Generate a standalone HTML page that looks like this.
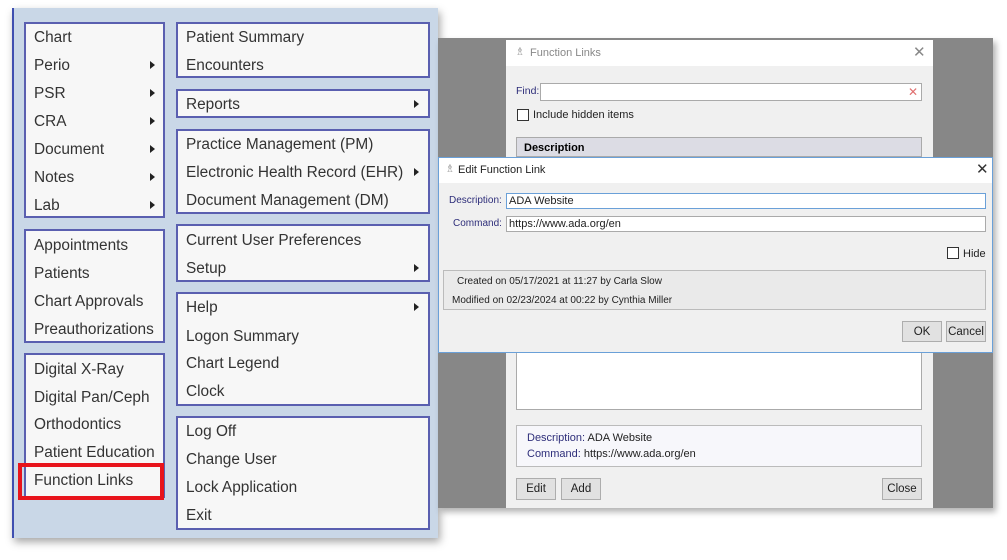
<!DOCTYPE html>
<html><head><style>
*{margin:0;padding:0;box-sizing:border-box}
body{width:1007px;height:560px;background:#fff;position:relative;overflow:hidden;font-family:"Liberation Sans",sans-serif}
.a{position:absolute}
.menu{left:12px;top:8px;width:426px;height:530px;background:#c9d7e7;border-left:2px solid #3f4fb0;box-shadow:2px 4px 8px rgba(0,0,0,.35)}
.box{position:absolute;background:#f7f7f7;border:2px solid #5a5fb0}
.it{position:absolute;left:8px;font-size:15.4px;color:#333;white-space:nowrap;margin-top:1px}
.ar{position:absolute;width:0;height:0;border-left:5px solid #222;border-top:4px solid transparent;border-bottom:4px solid transparent}
.gray{left:438px;top:38px;width:555px;height:470px;background:#878787;box-shadow:3px 4px 6px rgba(0,0,0,.3)}
.s{font-size:11px;color:#222}
.btn{position:absolute;background:#e1e1e1;border:1px solid #adadad;font-size:11.5px;color:#222;text-align:center}
.fld{position:absolute;background:#fff;border:1px solid #aaa}
.lbl{color:#2e2e7a}
.cb{position:absolute;width:12px;height:12px;border:1px solid #333;background:#fff}
</style></head><body>
<div class="a menu"></div>
<div class="box" style="left:24px;top:22px;width:141px;height:196px"></div>
<div class="box" style="left:24px;top:229px;width:141px;height:114px"></div>
<div class="box" style="left:24px;top:353px;width:141px;height:145px"></div>
<div class="box" style="left:176px;top:22px;width:254px;height:56px"></div>
<div class="box" style="left:176px;top:89px;width:254px;height:29px"></div>
<div class="box" style="left:176px;top:129px;width:254px;height:85px"></div>
<div class="box" style="left:176px;top:224px;width:254px;height:58px"></div>
<div class="box" style="left:176px;top:292px;width:254px;height:114px"></div>
<div class="box" style="left:176px;top:416px;width:254px;height:114px"></div>
<div class="a" style="left:18px;top:463px;width:146px;height:37px;border:4px solid #e8141c"></div>
<div class="it" style="left:34px;top:28px">Chart</div>
<div class="it" style="left:34px;top:56px">Perio</div>
<div class="it" style="left:34px;top:84px">PSR</div>
<div class="it" style="left:34px;top:112px">CRA</div>
<div class="it" style="left:34px;top:140px">Document</div>
<div class="it" style="left:34px;top:168px">Notes</div>
<div class="it" style="left:34px;top:196px">Lab</div>
<div class="ar" style="left:150px;top:61px"></div><div class="ar" style="left:150px;top:89px"></div><div class="ar" style="left:150px;top:117px"></div><div class="ar" style="left:150px;top:145px"></div><div class="ar" style="left:150px;top:173px"></div><div class="ar" style="left:150px;top:201px"></div>
<div class="it" style="left:34px;top:236px">Appointments</div>
<div class="it" style="left:34px;top:264px">Patients</div>
<div class="it" style="left:34px;top:292px">Chart Approvals</div>
<div class="it" style="left:34px;top:320px">Preauthorizations</div>
<div class="it" style="left:34px;top:360px">Digital X-Ray</div>
<div class="it" style="left:34px;top:388px">Digital Pan/Ceph</div>
<div class="it" style="left:34px;top:415px">Orthodontics</div>
<div class="it" style="left:34px;top:443px">Patient Education</div>
<div class="it" style="left:34px;top:471px">Function Links</div>
<div class="it" style="left:186px;top:28px">Patient Summary</div>
<div class="it" style="left:186px;top:56px">Encounters</div>
<div class="it" style="left:186px;top:95px">Reports</div>
<div class="it" style="left:186px;top:135px">Practice Management (PM)</div>
<div class="it" style="left:186px;top:163px">Electronic Health Record (EHR)</div>
<div class="it" style="left:186px;top:191px">Document Management (DM)</div>
<div class="it" style="left:186px;top:231px">Current User Preferences</div>
<div class="it" style="left:186px;top:259px">Setup</div>
<div class="it" style="left:186px;top:298px">Help</div>
<div class="it" style="left:186px;top:327px">Logon Summary</div>
<div class="it" style="left:186px;top:354px">Chart Legend</div>
<div class="it" style="left:186px;top:382px">Clock</div>
<div class="it" style="left:186px;top:422px">Log Off</div>
<div class="it" style="left:186px;top:450px">Change User</div>
<div class="it" style="left:186px;top:478px">Lock Application</div>
<div class="it" style="left:186px;top:506px">Exit</div>
<div class="ar" style="left:414px;top:100px"></div><div class="ar" style="left:414px;top:168px"></div><div class="ar" style="left:414px;top:264px"></div><div class="ar" style="left:414px;top:303px"></div>
<div class="a gray"></div>
<div class="a" style="left:506px;top:40px;width:427px;height:468px;background:#f0f0f0"></div>
<div class="a" style="left:506px;top:40px;width:427px;height:26px;background:#fff"></div>
<div class="a s" style="left:515px;top:45px;color:#999">&#9815;</div>
<div class="a s" style="left:530px;top:47px;color:#888">Function Links</div>
<div class="a" style="left:913px;top:43px;font-size:15px;color:#888">✕</div>
<div class="a s lbl" style="left:516px;top:85px;font-size:10.5px">Find:</div>
<div class="fld" style="left:540px;top:83px;width:382px;height:18px"></div>
<div class="a" style="left:908px;top:85px;font-size:12px;color:#e07070">✕</div>
<div class="cb" style="left:517px;top:109px"></div>
<div class="a s" style="left:533px;top:109px">Include hidden items</div>
<div class="a" style="left:516px;top:137px;width:406px;height:20px;background:#dcdce4;border:1px solid #aaa;font-size:11px;font-weight:bold;padding:4px 7px">Description</div>
<div class="fld" style="left:516px;top:352px;width:406px;height:58px"></div>
<div class="a" style="left:516px;top:425px;width:406px;height:42px;background:#f7f7fb;border:1px solid #bbb"></div>
<div class="a s" style="left:527px;top:432px"><span class="lbl">Description:</span> ADA Website</div>
<div class="a s" style="left:527px;top:448px"><span class="lbl">Command:</span> https://www.ada.org/en</div>
<div class="btn" style="left:516px;top:478px;width:40px;height:22px;line-height:20px">Edit</div>
<div class="btn" style="left:561px;top:478px;width:40px;height:22px;line-height:20px">Add</div>
<div class="btn" style="left:882px;top:478px;width:40px;height:22px;line-height:20px">Close</div>
<div class="a" style="left:438px;top:157px;width:555px;height:196px;background:#f0f0f0;border:1px solid #6aa0d8"></div>
<div class="a" style="left:439px;top:158px;width:553px;height:25px;background:#fff"></div>
<div class="a s" style="left:445px;top:162px;color:#999">&#9815;</div>
<div class="a s" style="left:458px;top:164px">Edit Function Link</div>
<div class="a" style="left:976px;top:160px;font-size:15px;color:#333">✕</div>
<div class="a s lbl" style="left:449px;top:195px;font-size:10px">Description:</div>
<div class="fld" style="left:506px;top:193px;width:480px;height:16px;border-color:#6aa0d8;font-size:11px;padding:1px 2px;color:#222">ADA Website</div>
<div class="a s lbl" style="left:453px;top:218px;font-size:10px">Command:</div>
<div class="fld" style="left:506px;top:216px;width:480px;height:16px;font-size:11px;padding:1px 2px;color:#222">https://www.ada.org/en</div>
<div class="cb" style="left:947px;top:247px"></div>
<div class="a s" style="left:963px;top:248px">Hide</div>
<div class="a" style="left:443px;top:270px;width:543px;height:40px;background:#eaeaea;border:1px solid #bbb"></div>
<div class="a" style="left:457px;top:276px;font-size:10px;color:#222">Created on 05/17/2021 at 11:27 by Carla Slow</div>
<div class="a" style="left:452px;top:295px;font-size:10px;color:#222">Modified on 02/23/2024 at 00:22 by Cynthia Miller</div>
<div class="btn" style="left:902px;top:321px;width:40px;height:21px;line-height:20px">OK</div>
<div class="btn" style="left:946px;top:321px;width:40px;height:21px;line-height:20px">Cancel</div>
</body></html>
